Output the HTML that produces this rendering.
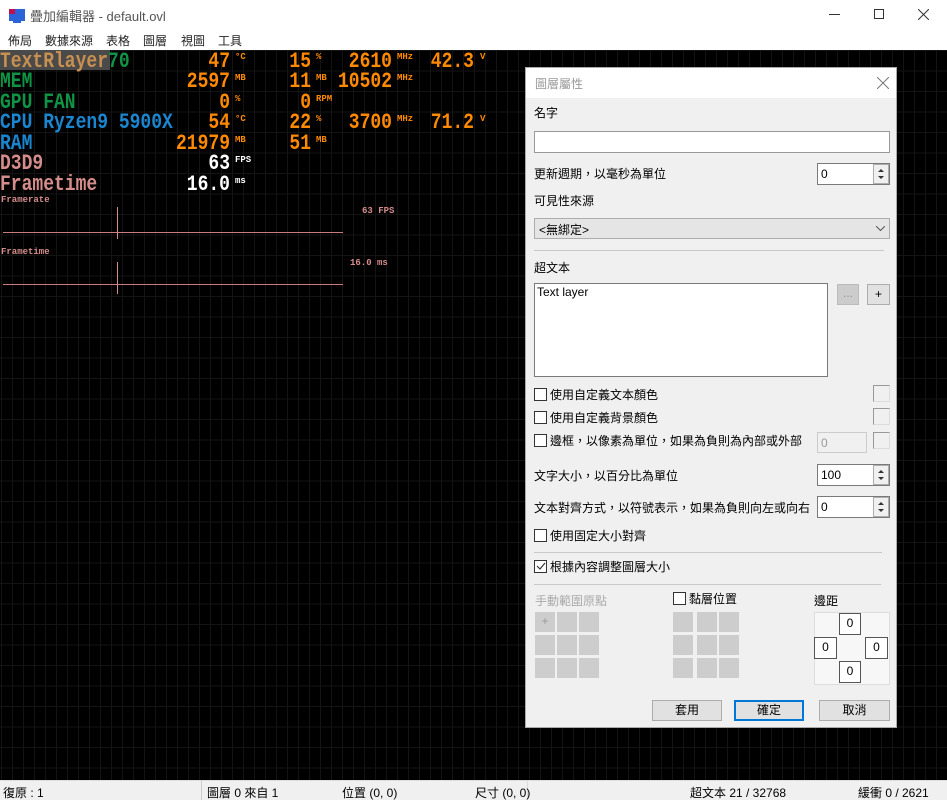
<!DOCTYPE html>
<html><head><meta charset="utf-8"><style>
*{margin:0;padding:0;box-sizing:border-box}
body{width:947px;height:800px;overflow:hidden;background:#fff;font-family:"Liberation Sans","Noto Sans CJK TC",sans-serif;font-size:12px;color:#000;position:relative}
.a{position:absolute;white-space:nowrap}
#canvas{position:absolute;left:0;top:50px;width:947px;height:730px;background-color:#000;
background-image:linear-gradient(90deg,#141414 1px,transparent 1px),linear-gradient(#141414 1px,transparent 1px);
background-size:11px 20.5px;background-position:1px 0}
.h{position:absolute;font-family:"Liberation Mono",monospace;font-weight:bold;font-size:18px;line-height:20px;white-space:nowrap;transform:scaleY(1.25);transform-origin:0 2px}
.u{position:absolute;font-family:"Liberation Mono",monospace;font-weight:bold;font-size:9px;line-height:9px;white-space:nowrap}
.r{text-align:right}
.g{color:#0e9444}.b{color:#1a86d0}.o{color:#ff8a00}.p{color:#d48d8a}.w{color:#fff}
.sm{position:absolute;font-family:"Liberation Mono",monospace;font-size:9px;font-weight:bold;color:#d48d8a;white-space:nowrap}
#dlg{position:absolute;left:525px;top:67px;width:372px;height:661px;background:#f0f0f0;border:1px solid #aaa}
.in{position:absolute;background:#fff;border:1px solid #7a7a7a}
.spin{position:absolute;width:16px;background:#f0f0f0;border:1px solid #adadad}
.spin:before{content:"";position:absolute;left:4px;top:4px;border:3px solid transparent;border-bottom:3px solid #333;border-top:0}
.spin:after{content:"";position:absolute;left:4px;bottom:4px;border:3px solid transparent;border-top:3px solid #333;border-bottom:0}
.cb{position:absolute;width:13px;height:13px;border:1px solid #333;background:#fff}
.cl{position:absolute;width:17px;height:17px;border:1px solid #999;border-right-color:#ddd;border-bottom-color:#ddd;background:#f0f0f0}
.sep{position:absolute;height:1px;background:#c8c8c8}
.cell{position:absolute;width:20px;height:20px;background:#cdcdcd}
.btn{position:absolute;height:21px;background:#e1e1e1;border:1px solid #adadad;text-align:center;line-height:19px}
.st{position:absolute;top:784px;font-size:12px;white-space:nowrap}
</style></head><body>
<div class="a" style="left:9px;top:9px;width:16px;height:12px;background:#2a64d8"></div>
<div class="a" style="left:9px;top:9px;width:6px;height:5px;background:#c01050"></div>
<div class="a" style="left:13px;top:21px;width:8px;height:2px;background:#2a64d8"></div>
<div class="a" style="left:30px;top:6px;font-size:13px;color:#555">疊加編輯器 - default.ovl</div>
<div class="a" style="left:829px;top:14px;width:11px;height:1px;background:#333"></div>
<div class="a" style="left:874px;top:9px;width:10px;height:10px;border:1px solid #333"></div>
<svg class="a" style="left:918px;top:9px" width="11" height="11"><path d="M0 0L11 11M11 0L0 11" stroke="#333" stroke-width="1"/></svg>
<div class="a" style="left:8px;top:32px;color:#222">佈局</div>
<div class="a" style="left:45px;top:32px;color:#222">數據來源</div>
<div class="a" style="left:106px;top:32px;color:#222">表格</div>
<div class="a" style="left:143px;top:32px;color:#222">圖層</div>
<div class="a" style="left:181px;top:32px;color:#222">視圖</div>
<div class="a" style="left:218px;top:32px;color:#222">工具</div>

<div id="canvas"></div>
<div class="a" style="left:0;top:50px;width:110px;height:20px;background:#4a4a4a"></div>
<div class="h" style="left:0;top:50px;color:#c89050">TextRlayer<span class="g">70</span></div>
<div class="h g" style="left:0;top:70px">MEM</div>
<div class="h g" style="left:0;top:91px">GPU FAN</div>
<div class="h b" style="left:0;top:111px">CPU Ryzen9 5900X</div>
<div class="h b" style="left:0;top:132px">RAM</div>
<div class="h p" style="left:0;top:152px">D3D9</div>
<div class="h p" style="left:0;top:173px">Frametime</div>

<div class="h o r" style="left:130px;width:100px;top:50px">47</div>
<div class="h o r" style="left:130px;width:100px;top:70px">2597</div>
<div class="h o r" style="left:130px;width:100px;top:91px">0</div>
<div class="h o r" style="left:130px;width:100px;top:111px">54</div>
<div class="h o r" style="left:130px;width:100px;top:132px">21979</div>
<div class="h w r" style="left:130px;width:100px;top:152px">63</div>
<div class="h w r" style="left:130px;width:100px;top:173px">16.0</div>
<div class="u o" style="left:235px;top:53px">°C</div>
<div class="u o" style="left:235px;top:74px">MB</div>
<div class="u o" style="left:235px;top:95px">%</div>
<div class="u o" style="left:235px;top:115px">°C</div>
<div class="u o" style="left:235px;top:136px">MB</div>
<div class="u w" style="left:235px;top:156px">FPS</div>
<div class="u w" style="left:235px;top:177px">ms</div>

<div class="h o r" style="left:210px;width:101px;top:50px">15</div>
<div class="h o r" style="left:210px;width:101px;top:70px">11</div>
<div class="h o r" style="left:210px;width:101px;top:91px">0</div>
<div class="h o r" style="left:210px;width:101px;top:111px">22</div>
<div class="h o r" style="left:210px;width:101px;top:132px">51</div>
<div class="u o" style="left:316px;top:53px">%</div>
<div class="u o" style="left:316px;top:74px">MB</div>
<div class="u o" style="left:316px;top:95px">RPM</div>
<div class="u o" style="left:316px;top:115px">%</div>
<div class="u o" style="left:316px;top:136px">MB</div>

<div class="h o r" style="left:290px;width:102px;top:50px">2610</div>
<div class="h o r" style="left:290px;width:102px;top:70px">10502</div>
<div class="h o r" style="left:290px;width:102px;top:111px">3700</div>
<div class="u o" style="left:397px;top:53px">MHz</div>
<div class="u o" style="left:397px;top:74px">MHz</div>
<div class="u o" style="left:397px;top:115px">MHz</div>
<div class="h o r" style="left:380px;width:94px;top:50px">42.3</div>
<div class="h o r" style="left:380px;width:94px;top:111px">71.2</div>
<div class="u o" style="left:480px;top:53px">V</div>
<div class="u o" style="left:480px;top:115px">V</div>

<div class="sm" style="left:1px;top:195px">Framerate</div>
<div class="sm" style="left:362px;top:206px">63 FPS</div>
<div class="a" style="left:3px;top:232px;width:340px;height:1px;background:#c87c7c"></div>
<div class="a" style="left:117px;top:207px;width:1px;height:32px;background:#d48d8a"></div>
<div class="sm" style="left:1px;top:247px">Frametime</div>
<div class="sm" style="left:350px;top:258px">16.0 ms</div>
<div class="a" style="left:3px;top:284px;width:340px;height:1px;background:#c87c7c"></div>
<div class="a" style="left:117px;top:262px;width:1px;height:32px;background:#d48d8a"></div>

<div id="dlg">
<div class="a" style="left:0;top:0;width:370px;height:30px;background:#fff"></div>
<div class="a" style="left:9px;top:7px;color:#999">圖層屬性</div>
<svg class="a" style="left:351px;top:9px" width="12" height="12"><path d="M0 0L12 12M12 0L0 12" stroke="#777" stroke-width="1"/></svg>
<div class="a" style="left:8px;top:36px">名字</div>
<div class="in" style="left:8px;top:63px;width:356px;height:22px;border-color:#999"></div>
<div class="a" style="left:8px;top:97px">更新週期，以毫秒為單位</div>
<div class="in" style="left:291px;top:95px;width:73px;height:22px"><span style="position:absolute;left:3px;top:3px">0</span></div>
<div class="spin" style="left:347px;top:96px;height:20px"></div>
<div class="a" style="left:8px;top:124px">可見性來源</div>
<div class="a" style="left:8px;top:150px;width:356px;height:21px;background:#e5e5e5;border:1px solid #adadad;padding:2px 4px">&lt;無綁定&gt;</div>
<svg class="a" style="left:350px;top:158px" width="9" height="6"><path d="M0 0L4.5 4.5L9 0" fill="none" stroke="#555"/></svg>
<div class="sep" style="left:8px;top:182px;width:350px"></div>
<div class="a" style="left:8px;top:191px">超文本</div>
<div class="in" style="left:8px;top:215px;width:294px;height:94px"><span style="position:absolute;left:2px;top:1px">Text layer</span></div>
<div class="a" style="left:311px;top:216px;width:22px;height:21px;background:#ccc;border:1px solid #bbb;color:#999;text-align:center;line-height:17px">...</div>
<div class="a" style="left:341px;top:216px;width:23px;height:21px;background:#e1e1e1;border:1px solid #adadad;text-align:center;line-height:19px">+</div>

<div class="cb" style="left:8px;top:320px"></div><div class="a" style="left:24px;top:318px">使用自定義文本顏色</div><div class="cl" style="left:347px;top:317px"></div>
<div class="cb" style="left:8px;top:343px"></div><div class="a" style="left:24px;top:341px">使用自定義背景顏色</div><div class="cl" style="left:347px;top:340px"></div>
<div class="cb" style="left:8px;top:366px"></div><div class="a" style="left:24px;top:364px">邊框，以像素為單位，如果為負則為內部或外部</div>
<div class="in" style="left:291px;top:364px;width:50px;height:21px;background:#f0f0f0;border-color:#ccc;color:#999"><span style="position:absolute;left:3px;top:3px">0</span></div>
<div class="cl" style="left:347px;top:364px"></div>
<div class="a" style="left:8px;top:399px">文字大小，以百分比為單位</div>
<div class="in" style="left:291px;top:396px;width:73px;height:22px"><span style="position:absolute;left:3px;top:3px">100</span></div>
<div class="spin" style="left:347px;top:397px;height:20px"></div>
<div class="a" style="left:8px;top:431px">文本對齊方式，以符號表示，如果為負則向左或向右</div>
<div class="in" style="left:291px;top:428px;width:73px;height:22px"><span style="position:absolute;left:3px;top:3px">0</span></div>
<div class="spin" style="left:347px;top:429px;height:20px"></div>
<div class="cb" style="left:8px;top:461px"></div><div class="a" style="left:24px;top:459px">使用固定大小對齊</div>
<div class="sep" style="left:8px;top:484px;width:348px"></div>
<div class="cb" style="left:8px;top:492px"></div><svg class="a" style="left:10px;top:494px" width="10" height="9"><path d="M1 4L4 7L9 1" fill="none" stroke="#333" stroke-width="1.2"/></svg>
<div class="a" style="left:24px;top:490px">根據內容調整圖層大小</div>
<div class="sep" style="left:8px;top:516px;width:347px"></div>
<div class="a" style="left:9px;top:524px;color:#aaa">手動範圍原點</div>
<div class="cell" style="left:9px;top:544px;color:#999;text-align:center;line-height:18px">+</div><div class="cell" style="left:31px;top:544px"></div><div class="cell" style="left:53px;top:544px"></div>
<div class="cell" style="left:9px;top:567px"></div><div class="cell" style="left:31px;top:567px"></div><div class="cell" style="left:53px;top:567px"></div>
<div class="cell" style="left:9px;top:590px"></div><div class="cell" style="left:31px;top:590px"></div><div class="cell" style="left:53px;top:590px"></div>
<div class="cb" style="left:147px;top:524px"></div><div class="a" style="left:163px;top:522px">黏層位置</div>
<div class="cell" style="left:147px;top:544px"></div><div class="cell" style="left:171px;top:544px"></div><div class="cell" style="left:193px;top:544px"></div>
<div class="cell" style="left:147px;top:567px"></div><div class="cell" style="left:171px;top:567px"></div><div class="cell" style="left:193px;top:567px"></div>
<div class="cell" style="left:147px;top:590px"></div><div class="cell" style="left:171px;top:590px"></div><div class="cell" style="left:193px;top:590px"></div>
<div class="a" style="left:288px;top:524px">邊距</div>
<div class="a" style="left:288px;top:544px;width:76px;height:73px;background:#f7f7f7;border:1px solid #ddd"></div>
<div class="in" style="left:313px;top:545px;width:22px;height:22px;border-color:#555;text-align:center;line-height:18px">0</div>
<div class="in" style="left:288px;top:569px;width:23px;height:22px;border-color:#555;text-align:center;line-height:18px">0</div>
<div class="in" style="left:339px;top:569px;width:23px;height:22px;border-color:#555;text-align:center;line-height:18px">0</div>
<div class="in" style="left:313px;top:593px;width:22px;height:22px;border-color:#555;text-align:center;line-height:18px">0</div>
<div class="btn" style="left:126px;top:632px;width:70px">套用</div>
<div class="btn" style="left:208px;top:632px;width:70px;border:2px solid #0078d7;line-height:17px">確定</div>
<div class="btn" style="left:293px;top:632px;width:71px">取消</div>
</div>

<div class="a" style="left:0;top:780px;width:947px;height:20px;background:#f0f0f0;border-top:1px solid #ddd"></div>
<div class="a" style="left:201px;top:781px;width:1px;height:19px;background:#ccc"></div>
<div class="a" style="left:527px;top:781px;width:1px;height:19px;background:#ddd"></div>
<div class="st" style="left:3px">復原 : 1</div>
<div class="st" style="left:207px">圖層 0 來自 1</div>
<div class="st" style="left:342px">位置 (0, 0)</div>
<div class="st" style="left:475px">尺寸 (0, 0)</div>
<div class="st" style="left:690px">超文本 21 / 32768</div>
<div class="st" style="left:858px">緩衝 0 / 2621</div>
</body></html>
